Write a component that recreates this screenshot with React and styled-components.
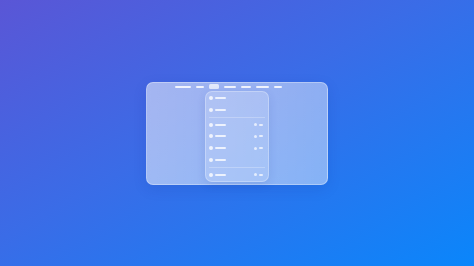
import React from 'react';
import styled, { createGlobalStyle } from 'styled-components';

const menuTitles = [
  { width: 16 },
  { width: 8 },
  { width: 10, active: true },
  { width: 12 },
  { width: 10 },
  { width: 13 },
  { width: 8 },
];

const groups = [
  [{}, {}],
  [{ shortcut: true }, { shortcut: true }, { shortcut: true }, {}],
  [{ shortcut: true }],
];

function App() {
  return (
    <>
      <GlobalStyle />
      <Stage>
        <Window>
          <MenuBar>
            {menuTitles.map((item, i) =>
              item.active ? (
                <ActiveTitle key={i} $width={item.width} />
              ) : (
                <MenuTitle key={i} $width={item.width} />
              )
            )}
          </MenuBar>
          <Dropdown>
            {groups.map((group, gi) => (
              <React.Fragment key={gi}>
                {gi > 0 && <Separator />}
                {group.map((row, ri) => (
                  <Row key={ri}>
                    <RowIcon />
                    <RowLabel />
                    {row.shortcut && (
                      <Shortcut>
                        <ShortcutKey />
                        <ShortcutLabel />
                      </Shortcut>
                    )}
                  </Row>
                ))}
              </React.Fragment>
            ))}
          </Dropdown>
        </Window>
      </Stage>
    </>
  );
}

export default App;

const GlobalStyle = createGlobalStyle`
  html, body {
    margin: 0;
    padding: 0;
    width: 100%;
    height: 100%;
    font-family: 'Inter', 'Liberation Sans', sans-serif;
  }
  #root {
    height: 100%;
  }
`;

const Stage = styled.div`
  width: 474px;
  height: 266px;
  display: flex;
  align-items: center;
  justify-content: center;
  background: linear-gradient(to bottom right, #5a56d6 0%, #3a6ce7 45%, #0a86fb 100%);
  overflow: hidden;
`;

const Window = styled.div`
  position: relative;
  box-sizing: border-box;
  width: 182px;
  height: 103px;
  padding: 1px 0 0 28px;
  border-radius: 7px;
  background: linear-gradient(to right, rgba(255, 255, 255, 0.52), rgba(255, 255, 255, 0.44));
  border: 1px solid rgba(255, 255, 255, 0.32);
  box-shadow: 0 4px 14px rgba(20, 40, 140, 0.12);
`;

const MenuBar = styled.div`
  display: flex;
  align-items: center;
  gap: 5px;
  height: 6px;
`;

const MenuTitle = styled.div`
  width: ${props => props.$width}px;
  height: 2px;
  border-radius: 1px;
  background: rgba(255, 255, 255, 0.85);
`;

const ActiveTitle = styled.div`
  width: ${props => props.$width}px;
  height: 5px;
  border-radius: 1.5px;
  background: rgba(255, 255, 255, 0.7);
`;

const Dropdown = styled.div`
  position: absolute;
  top: 8px;
  left: 58px;
  box-sizing: border-box;
  width: 64px;
  height: 91px;
  padding-top: 1px;
  border-radius: 7px;
  background: rgba(255, 255, 255, 0.2);
  border: 1px solid rgba(255, 255, 255, 0.28);
  box-shadow: 0 3px 10px rgba(30, 50, 150, 0.12);
  display: flex;
  flex-direction: column;
`;

const Row = styled.div`
  display: flex;
  align-items: center;
  height: 12px;
  padding: 0 5px 0 3px;

  & + & {
    margin-top: 0.5px;
  }
`;

const RowIcon = styled.div`
  width: 4px;
  height: 4px;
  border-radius: 50%;
  background: rgba(255, 255, 255, 0.8);
`;

const RowLabel = styled.div`
  width: 11px;
  height: 2px;
  margin-left: 2px;
  border-radius: 1px;
  background: rgba(255, 255, 255, 0.78);
`;

const Shortcut = styled.div`
  display: flex;
  align-items: center;
  gap: 2px;
  margin-left: auto;
`;

const ShortcutKey = styled.div`
  width: 3px;
  height: 3px;
  border-radius: 50%;
  background: rgba(255, 255, 255, 0.7);
`;

const ShortcutLabel = styled.div`
  width: 4px;
  height: 2px;
  border-radius: 1px;
  background: rgba(255, 255, 255, 0.7);
`;

const Separator = styled.div`
  height: 1px;
  margin: 1px 3px 1px;
  background: rgba(255, 255, 255, 0.25);
`;
